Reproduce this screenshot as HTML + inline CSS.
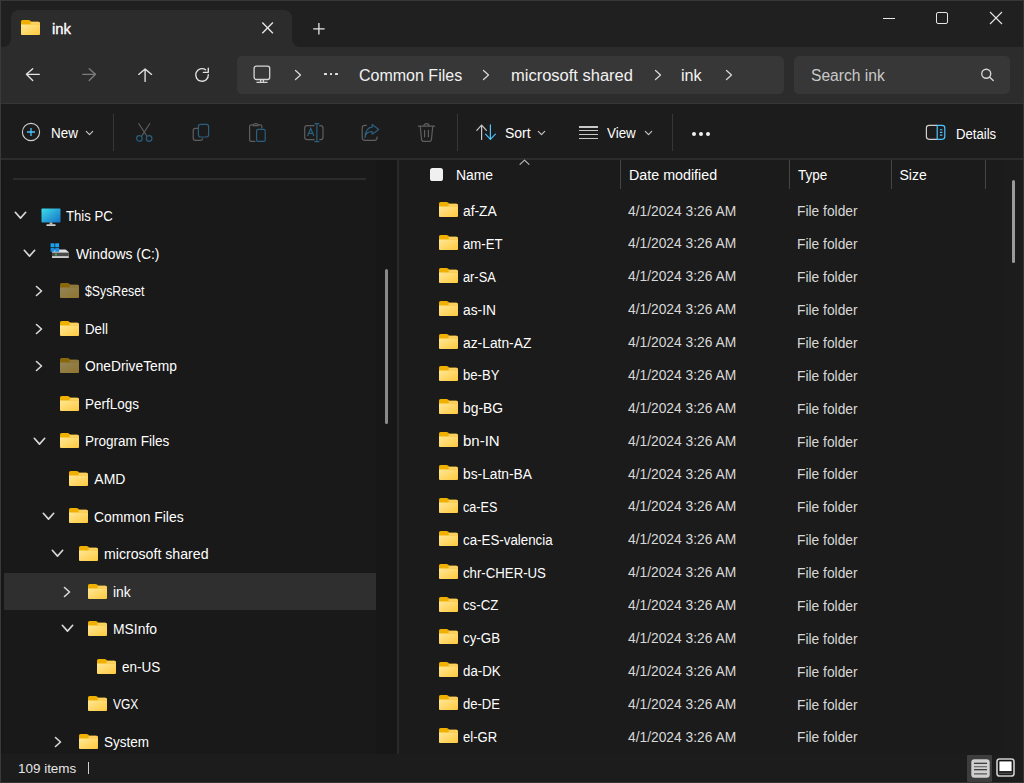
<!DOCTYPE html>
<html><head><meta charset="utf-8"><title>ink - File Explorer</title>
<style>
html,body{margin:0;padding:0;}
body{width:1024px;height:783px;overflow:hidden;position:relative;background:#191919;font-family:"Liberation Sans", sans-serif;}
.abs{position:absolute;}
.fd{position:absolute;overflow:visible;}
.t{position:absolute;white-space:nowrap;}
</style></head><body>
<svg width="0" height="0" style="position:absolute">
<defs>
<linearGradient id="fgr" x1="0" y1="0" x2="1" y2="1"><stop offset="0" stop-color="#FFE795"/><stop offset="1" stop-color="#FFC93E"/></linearGradient>
<linearGradient id="pcg" x1="0" y1="0" x2="1" y2="1"><stop offset="0" stop-color="#3DDCEB"/><stop offset="1" stop-color="#1571C6"/></linearGradient>
<symbol id="fold" viewBox="0 0 19 15">
<path d="M0 1.6Q0 0 1.6 0H7.6Q8.6 0 9.3 .8L10.3 1.8H17.4Q19 1.8 19 3.4V13.4Q19 15 17.4 15H1.6Q0 15 0 13.4Z" fill="#F0B000"/>
<path d="M9.6 1.8H17.4Q19 1.8 19 3.4V4.6H9.6Z" fill="#FAD060"/>
<path d="M0 4.6H19V13.4Q19 15 17.4 15H1.6Q0 15 0 13.4Z" fill="url(#fgr)"/>
</symbol>
</defs></svg>
<div class="abs" style="left:0;top:0;width:1024px;height:47px;background:#202020"></div>
<div class="abs" style="left:11px;top:10px;width:281px;height:37px;background:#2c2c2c;border-radius:8px 8px 0 0"></div>
<div class="abs" style="left:3px;top:39px;width:8px;height:8px;background:#2c2c2c"></div>
<div class="abs" style="left:3px;top:39px;width:8px;height:8px;background:#202020;border-bottom-right-radius:8px"></div>
<div class="abs" style="left:292px;top:39px;width:8px;height:8px;background:#2c2c2c"></div>
<div class="abs" style="left:292px;top:39px;width:8px;height:8px;background:#202020;border-bottom-left-radius:8px"></div>
<svg class="fd" style="left:21px;top:20px;" width="19" height="15" viewBox="0 0 19 15"><use href="#fold"/></svg>
<div class="t" style="left:51.5px;top:21.30px;font-size:15px;line-height:15px;color:#ffffff;transform:scaleX(0.9911);transform-origin:0 0;-webkit-text-stroke:.35px #fff;">ink</div>
<svg class="abs" style="left:261px;top:22px" width="13" height="12" viewBox="0 0 13 12"><path d="M1.3 .6L11.9 11.2M11.9 .6L1.3 11.2" stroke="#e6e6e6" stroke-width="1.35" fill="none"/></svg>
<svg class="abs" style="left:312px;top:22px" width="14" height="14" viewBox="0 0 14 14"><path d="M6.9 1.1V12.5M1.2 6.8H12.6" stroke="#e6e6e6" stroke-width="1.3" fill="none"/></svg>
<div class="abs" style="left:883px;top:17.5px;width:12px;height:1px;background:#e6e6e6"></div>
<div class="abs" style="left:936px;top:11.5px;width:10px;height:10px;border:1px solid #e6e6e6;border-radius:2px"></div>
<svg class="abs" style="left:989px;top:11px" width="14" height="14" viewBox="0 0 14 14"><path d="M1 1L13 13M13 1L1 13" stroke="#e6e6e6" stroke-width="1.1" fill="none"/></svg>
<div class="abs" style="left:0;top:47px;width:1024px;height:56px;background:#2c2c2c"></div>
<div class="abs" style="left:0;top:103px;width:1024px;height:1px;background:#363636"></div>
<svg class="abs" style="left:24px;top:66px" width="18" height="17" viewBox="0 0 18 17"><path d="M2.4 8.3H15.3M8.7 2.7L2.4 8.3L8.7 14.5" stroke="#e4e4e4" stroke-width="1.35" fill="none" stroke-linecap="round" stroke-linejoin="round"/></svg>
<svg class="abs" style="left:81px;top:66px" width="18" height="17" viewBox="0 0 18 17"><path d="M1.7 8.3H14.5M8.2 2.7L14.5 8.3L8.2 14.5" stroke="#7c7c7c" stroke-width="1.35" fill="none" stroke-linecap="round" stroke-linejoin="round"/></svg>
<svg class="abs" style="left:137px;top:67px" width="17" height="17" viewBox="0 0 17 17"><path d="M8.1 1.9V14.4M1.7 7.4L8.1 1.9L14.6 7.4" stroke="#e4e4e4" stroke-width="1.35" fill="none" stroke-linecap="round" stroke-linejoin="round"/></svg>
<svg class="abs" style="left:193px;top:66px" width="18" height="18" viewBox="0 0 18 18"><path d="M15.3 8.6A6.3 6.3 0 1 1 12.6 3.8" stroke="#e4e4e4" stroke-width="1.35" fill="none" stroke-linecap="round"/><path d="M15.3 2.2V6.3H10.3" stroke="#e4e4e4" stroke-width="1.35" fill="none" stroke-linecap="round" stroke-linejoin="round"/></svg>
<div class="abs" style="left:237px;top:56px;width:547px;height:38px;background:#373737;border-radius:5px"></div>
<svg class="abs" style="left:253px;top:65px" width="18" height="19" viewBox="0 0 18 19"><rect x="1.1" y="1.1" width="15.6" height="13.4" rx="2.2" stroke="#d6d6d6" stroke-width="1.3" fill="none"/><path d="M7.6 14.5V16.8M10.4 14.5V16.8M3.5 17.4H14.5" stroke="#d6d6d6" stroke-width="1.3" fill="none"/></svg>
<svg class="abs" style="left:293.5px;top:69px" width="8" height="12" viewBox="0 0 8 12"><path d="M1.5 1.5L6.5 6.0L1.5 10.5" stroke="#d6d6d6" stroke-width="1.3" fill="none" stroke-linecap="round" stroke-linejoin="round"/></svg>
<div class="abs" style="left:324px;top:72.8px;width:2.6px;height:2.6px;background:#e6e6e6;border-radius:.6px"></div>
<div class="abs" style="left:329.7px;top:72.8px;width:2.6px;height:2.6px;background:#e6e6e6;border-radius:.6px"></div>
<div class="abs" style="left:335.4px;top:72.8px;width:2.6px;height:2.6px;background:#e6e6e6;border-radius:.6px"></div>
<div class="t" style="left:359px;top:67.96px;font-size:16px;line-height:16px;color:#f2f2f2;">Common Files</div>
<svg class="abs" style="left:481.5px;top:69px" width="8" height="12" viewBox="0 0 8 12"><path d="M1.5 1.5L6.5 6.0L1.5 10.5" stroke="#d6d6d6" stroke-width="1.3" fill="none" stroke-linecap="round" stroke-linejoin="round"/></svg>
<div class="t" style="left:511px;top:67.96px;font-size:16px;line-height:16px;color:#f2f2f2;transform:scaleX(1.0310);transform-origin:0 0;">microsoft shared</div>
<svg class="abs" style="left:653.5px;top:69px" width="8" height="12" viewBox="0 0 8 12"><path d="M1.5 1.5L6.5 6.0L1.5 10.5" stroke="#d6d6d6" stroke-width="1.3" fill="none" stroke-linecap="round" stroke-linejoin="round"/></svg>
<div class="t" style="left:681px;top:67.96px;font-size:16px;line-height:16px;color:#f2f2f2;transform:scaleX(1.0115);transform-origin:0 0;">ink</div>
<svg class="abs" style="left:724.5px;top:69px" width="8" height="12" viewBox="0 0 8 12"><path d="M1.5 1.5L6.5 6.0L1.5 10.5" stroke="#d6d6d6" stroke-width="1.3" fill="none" stroke-linecap="round" stroke-linejoin="round"/></svg>
<div class="abs" style="left:794px;top:56px;width:216px;height:38px;background:#373737;border-radius:5px"></div>
<div class="t" style="left:811px;top:67.96px;font-size:16px;line-height:16px;color:#c9c9c9;transform:scaleX(0.9766);transform-origin:0 0;">Search ink</div>
<svg class="abs" style="left:979px;top:66px" width="17" height="17" viewBox="0 0 17 17"><circle cx="7.25" cy="7.75" r="4.5" stroke="#d6d6d6" stroke-width="1.35" fill="none"/><path d="M10.5 11L14.2 14.5" stroke="#d6d6d6" stroke-width="1.4" stroke-linecap="round"/></svg>
<div class="abs" style="left:0;top:104px;width:1024px;height:54px;background:#1c1c1c"></div>
<div class="abs" style="left:0;top:158px;width:1024px;height:2px;background:#2c2c2c"></div>
<svg class="abs" style="left:21px;top:122px" width="20" height="20" viewBox="0 0 20 20"><circle cx="10" cy="10" r="8.6" stroke="#cfcfcf" stroke-width="1.1" fill="none"/><path d="M10 6V14M6 10H14" stroke="#4cc2ff" stroke-width="1.3"/></svg>
<div class="t" style="left:51px;top:126.45px;font-size:14px;line-height:14px;color:#ffffff;transform:scaleX(0.9621);transform-origin:0 0;">New</div>
<svg class="abs" style="left:85px;top:129.5px" width="9" height="6" viewBox="0 0 9 6"><path d="M1.3 1.3L4.5 4.7L7.7 1.3" stroke="#c8c8c8" stroke-width="1.1" fill="none" stroke-linecap="round" stroke-linejoin="round"/></svg>
<div class="abs" style="left:113px;top:114px;width:1px;height:37px;background:#363636"></div>
<svg class="abs" style="left:134px;top:121px" width="21" height="22" viewBox="0 0 21 22"><path d="M4.5 2.2L12.6 14.8M16 2.2L7.9 14.8" stroke="#5e5e5e" stroke-width="1.2" fill="none"/><circle cx="5.4" cy="17.4" r="2.8" stroke="#2a5f7f" stroke-width="1.2" fill="#1c1c1c"/><circle cx="15.1" cy="17.4" r="2.8" stroke="#2a5f7f" stroke-width="1.2" fill="#1c1c1c"/></svg>
<svg class="abs" style="left:191px;top:122px" width="20" height="21" viewBox="0 0 20 21"><path d="M7 6.4H4.3Q2.2 6.4 2.2 8.5V15.9Q2.2 18.3 4.5 18.3H9.4Q11.4 18.3 11.6 16.2" stroke="#5e5e5e" stroke-width="1.2" fill="none"/><rect x="7.4" y="2.4" width="10.2" height="12.6" rx="2.2" stroke="#2a5f7f" stroke-width="1.2" fill="none"/></svg>
<svg class="abs" style="left:247px;top:122px" width="21" height="21" viewBox="0 0 21 21"><path d="M8.3 19.4H4.3Q2.6 19.4 2.6 17.7V4.5Q2.6 2.8 4.3 2.8H6.2M11.2 2.8H13.2Q14.9 2.8 14.9 4.5V6.6" stroke="#5e5e5e" stroke-width="1.2" fill="none"/><path d="M6.2 3.6Q6.2 1.6 8.7 1.6Q11.2 1.6 11.2 3.6Z" stroke="#5e5e5e" stroke-width="1.1" fill="none"/><rect x="9.6" y="7.4" width="8.6" height="12" rx="1.4" stroke="#2a5f7f" stroke-width="1.2" fill="none"/></svg>
<svg class="abs" style="left:303px;top:122px" width="22" height="21" viewBox="0 0 22 21"><path d="M11.6 3.6H4.2Q1.7 3.6 1.7 6.1V15.2Q1.7 17.6 4.2 17.6H11.6M16.2 3.6H17.6Q20 3.6 20 6.1V15.2Q20 17.6 17.6 17.6H16.2" stroke="#5e5e5e" stroke-width="1.2" fill="none"/><path d="M4.6 14L7.7 6.4L10.9 14M5.8 11.3H9.7" stroke="#2a5f7f" stroke-width="1.2" fill="none"/><path d="M13.9 1.7V19.6M11.5 1.7H16.3M11.5 19.6H16.3" stroke="#2a5f7f" stroke-width="1.2" fill="none"/></svg>
<svg class="abs" style="left:360px;top:122px" width="21" height="21" viewBox="0 0 21 21"><path d="M6.8 3.3H5Q2.2 3.3 2.2 6.1V15.6Q2.2 18.4 5 18.4H14.4Q17.1 18.4 17.1 15.6V14.6" stroke="#5e5e5e" stroke-width="1.2" fill="none"/><path d="M5 15.5Q5.6 9.5 12.2 9.6V12.2L18.7 7.4L12.2 2.5V5.1Q5.5 5.5 5 15.5Z" stroke="#2a5f7f" stroke-width="1.2" fill="none" stroke-linejoin="round"/></svg>
<svg class="abs" style="left:416px;top:121px" width="21" height="22" viewBox="0 0 21 22"><path d="M2.3 5.2H18.6M7.9 5.2Q7.9 2.7 10.5 2.7Q13.1 2.7 13.1 5.2M4.2 5.2L5.6 18.6Q5.8 20.3 7.5 20.3H13.5Q15.2 20.3 15.4 18.6L16.8 5.2M8.6 9.3V15.8M12.4 9.3V15.8" stroke="#5e5e5e" stroke-width="1.2" fill="none" stroke-linecap="round"/></svg>
<div class="abs" style="left:457px;top:114px;width:1px;height:37px;background:#363636"></div>
<svg class="abs" style="left:475px;top:123px" width="23" height="18" viewBox="0 0 23 18"><path d="M6.6 2.2V16.4M1.8 7.4L6.6 2.2L11.4 7.4" stroke="#c8c8c8" stroke-width="1.2" fill="none" stroke-linecap="round" stroke-linejoin="round"/><path d="M15.4 1.8V16.4M10.6 11.2L15.4 16.4L20.4 11.2" stroke="#4cc2ff" stroke-width="1.2" fill="none" stroke-linecap="round" stroke-linejoin="round"/></svg>
<div class="t" style="left:505px;top:126.45px;font-size:14px;line-height:14px;color:#ffffff;">Sort</div>
<svg class="abs" style="left:537px;top:129.5px" width="9" height="6" viewBox="0 0 9 6"><path d="M1.3 1.3L4.5 4.7L7.7 1.3" stroke="#c8c8c8" stroke-width="1.1" fill="none" stroke-linecap="round" stroke-linejoin="round"/></svg>
<div class="abs" style="left:579px;top:126.4px;width:19px;height:1.3px;background:#c8c8c8"></div>
<div class="abs" style="left:579px;top:130.1px;width:19px;height:1.3px;background:#c8c8c8"></div>
<div class="abs" style="left:579px;top:133.8px;width:19px;height:1.3px;background:#c8c8c8"></div>
<div class="abs" style="left:579px;top:137.5px;width:19px;height:1.3px;background:#c8c8c8"></div>
<div class="t" style="left:607px;top:126.45px;font-size:14px;line-height:14px;color:#ffffff;transform:scaleX(0.9554);transform-origin:0 0;">View</div>
<svg class="abs" style="left:644px;top:129.5px" width="9" height="6" viewBox="0 0 9 6"><path d="M1.3 1.3L4.5 4.7L7.7 1.3" stroke="#c8c8c8" stroke-width="1.1" fill="none" stroke-linecap="round" stroke-linejoin="round"/></svg>
<div class="abs" style="left:672px;top:114px;width:1px;height:37px;background:#363636"></div>
<div class="abs" style="left:691.6px;top:131.5px;width:4px;height:4px;background:#f0f0f0;border-radius:50%"></div>
<div class="abs" style="left:698.95px;top:131.5px;width:4px;height:4px;background:#f0f0f0;border-radius:50%"></div>
<div class="abs" style="left:706.3px;top:131.5px;width:4px;height:4px;background:#f0f0f0;border-radius:50%"></div>
<svg class="abs" style="left:925px;top:124px" width="22" height="17" viewBox="0 0 22 17"><path d="M12.2 1.3H4.1Q1.4 1.3 1.4 4V12.6Q1.4 15.3 4.1 15.3H12.2" stroke="#cfcfcf" stroke-width="1.2" fill="none"/><path d="M12.2 1.3H17Q19.8 1.3 19.8 4V12.6Q19.8 15.3 17 15.3H12.2Z" stroke="#4cc2ff" stroke-width="1.2" fill="none"/><path d="M14.9 5.7H17.4M14.9 8.4H17.4M14.9 11.1H17.4" stroke="#4cc2ff" stroke-width="1.1"/></svg>
<div class="t" style="left:956px;top:126.75px;font-size:14px;line-height:14px;color:#ffffff;transform:scaleX(0.9394);transform-origin:0 0;">Details</div>
<div class="abs" style="left:0;top:160px;width:1024px;height:594px;background:#1b1b1b"></div>
<div class="abs" style="left:0;top:160px;width:397px;height:594px;background:#191919"></div>
<div class="abs" style="left:376px;top:160px;width:21px;height:594px;background:#171717"></div>
<div class="abs" style="left:1px;top:160px;width:2.5px;height:594px;background:#171717"></div>
<div class="abs" style="left:13px;top:178px;width:353px;height:2px;background:#2b2b2b"></div>
<div class="abs" style="left:385px;top:269px;width:2.5px;height:155px;background:#8a8a8a;border-radius:2px"></div>
<div class="abs" style="left:397px;top:160px;width:2px;height:594px;background:#2a2a2a"></div>
<svg class="abs" style="left:14.0px;top:211.1px" width="13" height="8.4" viewBox="0 0 13 8.4"><path d="M1.3 1.3L6.5 7.1000000000000005L11.7 1.3" stroke="#d8d8d8" stroke-width="1.65" fill="none" stroke-linecap="round" stroke-linejoin="round"/></svg>
<svg class="abs" style="left:40.5px;top:207.80px" width="20" height="19" viewBox="0 0 20 19"><rect x=".5" y=".5" width="19" height="14" rx=".8" fill="url(#pcg)"/><rect x="8.6" y="14.5" width="2.8" height="2" fill="#b9b9b9"/><rect x="5.3" y="16.3" width="9.4" height="1.8" rx=".8" fill="#cfcfcf"/></svg>
<div class="t" style="left:66.3px;top:209.05px;font-size:14px;line-height:14px;color:#ffffff;transform:scaleX(0.9401);transform-origin:0 0;">This PC</div>
<svg class="abs" style="left:23.35px;top:248.67px" width="13" height="8.4" viewBox="0 0 13 8.4"><path d="M1.3 1.3L6.5 7.1000000000000005L11.7 1.3" stroke="#d8d8d8" stroke-width="1.65" fill="none" stroke-linecap="round" stroke-linejoin="round"/></svg>
<svg class="abs" style="left:49.5px;top:243.37px" width="20" height="16" viewBox="0 0 20 16"><path d="M4 6.6H15.6L18.6 9V14Q18.6 15 17.6 15H3Q2 15 2 14V9Z" fill="#dedede"/><rect x="2" y="9.6" width="16.6" height="3.8" fill="#4a4a4a"/><rect x="2" y="13.4" width="16.6" height="1.6" fill="#cfcfcf"/><circle cx="6" cy="11.5" r=".9" fill="#39d353"/><rect x=".6" y=".3" width="3.9" height="3.9" fill="#1aa3f0"/><rect x="5.2" y=".3" width="3.9" height="3.9" fill="#1aa3f0"/><rect x=".6" y="4.9" width="3.9" height="3.9" fill="#1590e6"/><rect x="5.2" y="4.9" width="3.9" height="3.9" fill="#1590e6"/></svg>
<div class="t" style="left:75.65px;top:246.62px;font-size:14px;line-height:14px;color:#ffffff;transform:scaleX(0.9929);transform-origin:0 0;">Windows (C:)</div>
<svg class="abs" style="left:35.2px;top:285.24px" width="8" height="12" viewBox="0 0 8 12"><path d="M1.5 1.5L6.5 6.0L1.5 10.5" stroke="#d8d8d8" stroke-width="1.65" fill="none" stroke-linecap="round" stroke-linejoin="round"/></svg>
<svg class="fd" style="left:60.0px;top:282.94px;opacity:.52;" width="19" height="15" viewBox="0 0 19 15"><use href="#fold"/></svg>
<div class="t" style="left:85.0px;top:284.19px;font-size:14px;line-height:14px;color:#ffffff;transform:scaleX(0.8775);transform-origin:0 0;">$SysReset</div>
<svg class="abs" style="left:35.2px;top:322.81px" width="8" height="12" viewBox="0 0 8 12"><path d="M1.5 1.5L6.5 6.0L1.5 10.5" stroke="#d8d8d8" stroke-width="1.65" fill="none" stroke-linecap="round" stroke-linejoin="round"/></svg>
<svg class="fd" style="left:60.0px;top:320.51px;" width="19" height="15" viewBox="0 0 19 15"><use href="#fold"/></svg>
<div class="t" style="left:85.0px;top:321.76px;font-size:14px;line-height:14px;color:#ffffff;transform:scaleX(0.9497);transform-origin:0 0;">Dell</div>
<svg class="abs" style="left:35.2px;top:360.38px" width="8" height="12" viewBox="0 0 8 12"><path d="M1.5 1.5L6.5 6.0L1.5 10.5" stroke="#d8d8d8" stroke-width="1.65" fill="none" stroke-linecap="round" stroke-linejoin="round"/></svg>
<svg class="fd" style="left:60.0px;top:358.08px;opacity:.52;" width="19" height="15" viewBox="0 0 19 15"><use href="#fold"/></svg>
<div class="t" style="left:85.0px;top:359.33px;font-size:14px;line-height:14px;color:#ffffff;transform:scaleX(0.9831);transform-origin:0 0;">OneDriveTemp</div>
<svg class="fd" style="left:60.0px;top:395.65px;" width="19" height="15" viewBox="0 0 19 15"><use href="#fold"/></svg>
<div class="t" style="left:85.0px;top:396.90px;font-size:14px;line-height:14px;color:#ffffff;transform:scaleX(0.9619);transform-origin:0 0;">PerfLogs</div>
<svg class="abs" style="left:32.7px;top:436.52px" width="13" height="8.4" viewBox="0 0 13 8.4"><path d="M1.3 1.3L6.5 7.1000000000000005L11.7 1.3" stroke="#d8d8d8" stroke-width="1.65" fill="none" stroke-linecap="round" stroke-linejoin="round"/></svg>
<svg class="fd" style="left:60.0px;top:433.22px;" width="19" height="15" viewBox="0 0 19 15"><use href="#fold"/></svg>
<div class="t" style="left:85.0px;top:434.47px;font-size:14px;line-height:14px;color:#ffffff;transform:scaleX(0.9664);transform-origin:0 0;">Program Files</div>
<svg class="fd" style="left:69.35px;top:470.79px;" width="19" height="15" viewBox="0 0 19 15"><use href="#fold"/></svg>
<div class="t" style="left:94.35px;top:472.04px;font-size:14px;line-height:14px;color:#ffffff;">AMD</div>
<svg class="abs" style="left:42.05px;top:511.65999999999997px" width="13" height="8.4" viewBox="0 0 13 8.4"><path d="M1.3 1.3L6.5 7.1000000000000005L11.7 1.3" stroke="#d8d8d8" stroke-width="1.65" fill="none" stroke-linecap="round" stroke-linejoin="round"/></svg>
<svg class="fd" style="left:69.35px;top:508.36px;" width="19" height="15" viewBox="0 0 19 15"><use href="#fold"/></svg>
<div class="t" style="left:94.35px;top:509.61px;font-size:14px;line-height:14px;color:#ffffff;transform:scaleX(0.9934);transform-origin:0 0;">Common Files</div>
<svg class="abs" style="left:51.4px;top:549.23px" width="13" height="8.4" viewBox="0 0 13 8.4"><path d="M1.3 1.3L6.5 7.1000000000000005L11.7 1.3" stroke="#d8d8d8" stroke-width="1.65" fill="none" stroke-linecap="round" stroke-linejoin="round"/></svg>
<svg class="fd" style="left:78.7px;top:545.93px;" width="19" height="15" viewBox="0 0 19 15"><use href="#fold"/></svg>
<div class="t" style="left:103.7px;top:547.18px;font-size:14px;line-height:14px;color:#ffffff;transform:scaleX(1.0098);transform-origin:0 0;">microsoft shared</div>
<div class="abs" style="left:3.5px;top:572.70px;width:372px;height:37px;background:#2f2f2f;border-radius:1px"></div>
<svg class="abs" style="left:63.25px;top:585.8px" width="8" height="12" viewBox="0 0 8 12"><path d="M1.5 1.5L6.5 6.0L1.5 10.5" stroke="#d8d8d8" stroke-width="1.65" fill="none" stroke-linecap="round" stroke-linejoin="round"/></svg>
<svg class="fd" style="left:88.05px;top:583.5px;" width="19" height="15" viewBox="0 0 19 15"><use href="#fold"/></svg>
<div class="t" style="left:113.05px;top:584.75px;font-size:14px;line-height:14px;color:#ffffff;transform:scaleX(0.9922);transform-origin:0 0;">ink</div>
<svg class="abs" style="left:60.75px;top:624.37px" width="13" height="8.4" viewBox="0 0 13 8.4"><path d="M1.3 1.3L6.5 7.1000000000000005L11.7 1.3" stroke="#d8d8d8" stroke-width="1.65" fill="none" stroke-linecap="round" stroke-linejoin="round"/></svg>
<svg class="fd" style="left:88.05px;top:621.07px;" width="19" height="15" viewBox="0 0 19 15"><use href="#fold"/></svg>
<div class="t" style="left:113.05px;top:622.32px;font-size:14px;line-height:14px;color:#ffffff;transform:scaleX(0.9929);transform-origin:0 0;">MSInfo</div>
<svg class="fd" style="left:97.4px;top:658.64px;" width="19" height="15" viewBox="0 0 19 15"><use href="#fold"/></svg>
<div class="t" style="left:122.4px;top:659.89px;font-size:14px;line-height:14px;color:#ffffff;transform:scaleX(0.9633);transform-origin:0 0;">en-US</div>
<svg class="fd" style="left:88.05px;top:696.21px;" width="19" height="15" viewBox="0 0 19 15"><use href="#fold"/></svg>
<div class="t" style="left:113.05px;top:697.46px;font-size:14px;line-height:14px;color:#ffffff;transform:scaleX(0.8585);transform-origin:0 0;">VGX</div>
<svg class="abs" style="left:53.9px;top:736.08px" width="8" height="12" viewBox="0 0 8 12"><path d="M1.5 1.5L6.5 6.0L1.5 10.5" stroke="#d8d8d8" stroke-width="1.65" fill="none" stroke-linecap="round" stroke-linejoin="round"/></svg>
<svg class="fd" style="left:78.7px;top:733.78px;" width="19" height="15" viewBox="0 0 19 15"><use href="#fold"/></svg>
<div class="t" style="left:103.7px;top:735.03px;font-size:14px;line-height:14px;color:#ffffff;transform:scaleX(0.9606);transform-origin:0 0;">System</div>
<div class="abs" style="left:429.5px;top:167.5px;width:13.5px;height:13.5px;background:#f0f0f0;border-radius:2.6px"></div>
<div class="t" style="left:456px;top:167.85px;font-size:14px;line-height:14px;color:#ffffff;transform:scaleX(0.9931);transform-origin:0 0;">Name</div>
<svg class="abs" style="left:518px;top:158px" width="13" height="9" viewBox="0 0 13 9"><path d="M2 6.4L6.5 2.2L11 6.4" stroke="#bdbdbd" stroke-width="1.1" fill="none" stroke-linecap="round" stroke-linejoin="round"/></svg>
<div class="abs" style="left:620px;top:160px;width:1px;height:29px;background:#454545"></div>
<div class="abs" style="left:789px;top:160px;width:1px;height:29px;background:#454545"></div>
<div class="abs" style="left:891px;top:160px;width:1px;height:29px;background:#454545"></div>
<div class="abs" style="left:985px;top:160px;width:1px;height:29px;background:#454545"></div>
<div class="t" style="left:628.5px;top:167.85px;font-size:14px;line-height:14px;color:#ffffff;transform:scaleX(1.0199);transform-origin:0 0;">Date modified</div>
<div class="t" style="left:797.5px;top:167.85px;font-size:14px;line-height:14px;color:#ffffff;transform:scaleX(0.9651);transform-origin:0 0;">Type</div>
<div class="t" style="left:899.5px;top:167.85px;font-size:14px;line-height:14px;color:#ffffff;">Size</div>
<div class="abs" style="left:1003px;top:160px;width:20px;height:594px;background:#1c1c1c"></div>
<div class="abs" style="left:1012px;top:179.5px;width:3px;height:83.5px;background:#9a9a9a;border-radius:2px"></div>
<svg class="fd" style="left:439px;top:202.1px;" width="19" height="15" viewBox="0 0 19 15"><use href="#fold"/></svg>
<div class="t" style="left:463.2px;top:204.05px;font-size:14px;line-height:14px;color:#ffffff;transform:scaleX(0.9860);transform-origin:0 0;">af-ZA</div>
<div class="t" style="left:628px;top:204.62px;font-size:13.8px;line-height:13.8px;color:#d8d8d8;">4/1/2024 3:26 AM</div>
<div class="t" style="left:797.3px;top:204.45px;font-size:14px;line-height:14px;color:#d8d8d8;transform:scaleX(0.9853);transform-origin:0 0;">File folder</div>
<svg class="fd" style="left:439px;top:234.97px;" width="19" height="15" viewBox="0 0 19 15"><use href="#fold"/></svg>
<div class="t" style="left:463.2px;top:236.92px;font-size:14px;line-height:14px;color:#ffffff;transform:scaleX(0.9400);transform-origin:0 0;">am-ET</div>
<div class="t" style="left:628px;top:237.49px;font-size:13.8px;line-height:13.8px;color:#d8d8d8;">4/1/2024 3:26 AM</div>
<div class="t" style="left:797.3px;top:237.32px;font-size:14px;line-height:14px;color:#d8d8d8;transform:scaleX(0.9853);transform-origin:0 0;">File folder</div>
<svg class="fd" style="left:439px;top:267.84px;" width="19" height="15" viewBox="0 0 19 15"><use href="#fold"/></svg>
<div class="t" style="left:463.2px;top:269.79px;font-size:14px;line-height:14px;color:#ffffff;transform:scaleX(0.9136);transform-origin:0 0;">ar-SA</div>
<div class="t" style="left:628px;top:270.36px;font-size:13.8px;line-height:13.8px;color:#d8d8d8;">4/1/2024 3:26 AM</div>
<div class="t" style="left:797.3px;top:270.19px;font-size:14px;line-height:14px;color:#d8d8d8;transform:scaleX(0.9853);transform-origin:0 0;">File folder</div>
<svg class="fd" style="left:439px;top:300.71px;" width="19" height="15" viewBox="0 0 19 15"><use href="#fold"/></svg>
<div class="t" style="left:463.2px;top:302.66px;font-size:14px;line-height:14px;color:#ffffff;transform:scaleX(0.9834);transform-origin:0 0;">as-IN</div>
<div class="t" style="left:628px;top:303.23px;font-size:13.8px;line-height:13.8px;color:#d8d8d8;">4/1/2024 3:26 AM</div>
<div class="t" style="left:797.3px;top:303.06px;font-size:14px;line-height:14px;color:#d8d8d8;transform:scaleX(0.9853);transform-origin:0 0;">File folder</div>
<svg class="fd" style="left:439px;top:333.58px;" width="19" height="15" viewBox="0 0 19 15"><use href="#fold"/></svg>
<div class="t" style="left:463.2px;top:335.53px;font-size:14px;line-height:14px;color:#ffffff;transform:scaleX(0.9871);transform-origin:0 0;">az-Latn-AZ</div>
<div class="t" style="left:628px;top:336.10px;font-size:13.8px;line-height:13.8px;color:#d8d8d8;">4/1/2024 3:26 AM</div>
<div class="t" style="left:797.3px;top:335.93px;font-size:14px;line-height:14px;color:#d8d8d8;transform:scaleX(0.9853);transform-origin:0 0;">File folder</div>
<svg class="fd" style="left:439px;top:366.45px;" width="19" height="15" viewBox="0 0 19 15"><use href="#fold"/></svg>
<div class="t" style="left:463.2px;top:368.40px;font-size:14px;line-height:14px;color:#ffffff;transform:scaleX(0.9350);transform-origin:0 0;">be-BY</div>
<div class="t" style="left:628px;top:368.97px;font-size:13.8px;line-height:13.8px;color:#d8d8d8;">4/1/2024 3:26 AM</div>
<div class="t" style="left:797.3px;top:368.80px;font-size:14px;line-height:14px;color:#d8d8d8;transform:scaleX(0.9853);transform-origin:0 0;">File folder</div>
<svg class="fd" style="left:439px;top:399.32px;" width="19" height="15" viewBox="0 0 19 15"><use href="#fold"/></svg>
<div class="t" style="left:463.2px;top:401.27px;font-size:14px;line-height:14px;color:#ffffff;transform:scaleX(0.9906);transform-origin:0 0;">bg-BG</div>
<div class="t" style="left:628px;top:401.84px;font-size:13.8px;line-height:13.8px;color:#d8d8d8;">4/1/2024 3:26 AM</div>
<div class="t" style="left:797.3px;top:401.67px;font-size:14px;line-height:14px;color:#d8d8d8;transform:scaleX(0.9853);transform-origin:0 0;">File folder</div>
<svg class="fd" style="left:439px;top:432.19px;" width="19" height="15" viewBox="0 0 19 15"><use href="#fold"/></svg>
<div class="t" style="left:463.2px;top:434.14px;font-size:14px;line-height:14px;color:#ffffff;transform:scaleX(1.0717);transform-origin:0 0;">bn-IN</div>
<div class="t" style="left:628px;top:434.71px;font-size:13.8px;line-height:13.8px;color:#d8d8d8;">4/1/2024 3:26 AM</div>
<div class="t" style="left:797.3px;top:434.54px;font-size:14px;line-height:14px;color:#d8d8d8;transform:scaleX(0.9853);transform-origin:0 0;">File folder</div>
<svg class="fd" style="left:439px;top:465.06px;" width="19" height="15" viewBox="0 0 19 15"><use href="#fold"/></svg>
<div class="t" style="left:463.2px;top:467.01px;font-size:14px;line-height:14px;color:#ffffff;transform:scaleX(0.9845);transform-origin:0 0;">bs-Latn-BA</div>
<div class="t" style="left:628px;top:467.58px;font-size:13.8px;line-height:13.8px;color:#d8d8d8;">4/1/2024 3:26 AM</div>
<div class="t" style="left:797.3px;top:467.41px;font-size:14px;line-height:14px;color:#d8d8d8;transform:scaleX(0.9853);transform-origin:0 0;">File folder</div>
<svg class="fd" style="left:439px;top:497.93px;" width="19" height="15" viewBox="0 0 19 15"><use href="#fold"/></svg>
<div class="t" style="left:463.2px;top:499.88px;font-size:14px;line-height:14px;color:#ffffff;transform:scaleX(0.8998);transform-origin:0 0;">ca-ES</div>
<div class="t" style="left:628px;top:500.45px;font-size:13.8px;line-height:13.8px;color:#d8d8d8;">4/1/2024 3:26 AM</div>
<div class="t" style="left:797.3px;top:500.28px;font-size:14px;line-height:14px;color:#d8d8d8;transform:scaleX(0.9853);transform-origin:0 0;">File folder</div>
<svg class="fd" style="left:439px;top:530.8px;" width="19" height="15" viewBox="0 0 19 15"><use href="#fold"/></svg>
<div class="t" style="left:463.2px;top:532.75px;font-size:14px;line-height:14px;color:#ffffff;transform:scaleX(0.9516);transform-origin:0 0;">ca-ES-valencia</div>
<div class="t" style="left:628px;top:533.32px;font-size:13.8px;line-height:13.8px;color:#d8d8d8;">4/1/2024 3:26 AM</div>
<div class="t" style="left:797.3px;top:533.15px;font-size:14px;line-height:14px;color:#d8d8d8;transform:scaleX(0.9853);transform-origin:0 0;">File folder</div>
<svg class="fd" style="left:439px;top:563.67px;" width="19" height="15" viewBox="0 0 19 15"><use href="#fold"/></svg>
<div class="t" style="left:463.2px;top:565.62px;font-size:14px;line-height:14px;color:#ffffff;transform:scaleX(0.9434);transform-origin:0 0;">chr-CHER-US</div>
<div class="t" style="left:628px;top:566.19px;font-size:13.8px;line-height:13.8px;color:#d8d8d8;">4/1/2024 3:26 AM</div>
<div class="t" style="left:797.3px;top:566.02px;font-size:14px;line-height:14px;color:#d8d8d8;transform:scaleX(0.9853);transform-origin:0 0;">File folder</div>
<svg class="fd" style="left:439px;top:596.54px;" width="19" height="15" viewBox="0 0 19 15"><use href="#fold"/></svg>
<div class="t" style="left:463.2px;top:598.49px;font-size:14px;line-height:14px;color:#ffffff;transform:scaleX(0.9451);transform-origin:0 0;">cs-CZ</div>
<div class="t" style="left:628px;top:599.06px;font-size:13.8px;line-height:13.8px;color:#d8d8d8;">4/1/2024 3:26 AM</div>
<div class="t" style="left:797.3px;top:598.89px;font-size:14px;line-height:14px;color:#d8d8d8;transform:scaleX(0.9853);transform-origin:0 0;">File folder</div>
<svg class="fd" style="left:439px;top:629.41px;" width="19" height="15" viewBox="0 0 19 15"><use href="#fold"/></svg>
<div class="t" style="left:463.2px;top:631.36px;font-size:14px;line-height:14px;color:#ffffff;transform:scaleX(0.9520);transform-origin:0 0;">cy-GB</div>
<div class="t" style="left:628px;top:631.93px;font-size:13.8px;line-height:13.8px;color:#d8d8d8;">4/1/2024 3:26 AM</div>
<div class="t" style="left:797.3px;top:631.76px;font-size:14px;line-height:14px;color:#d8d8d8;transform:scaleX(0.9853);transform-origin:0 0;">File folder</div>
<svg class="fd" style="left:439px;top:662.28px;" width="19" height="15" viewBox="0 0 19 15"><use href="#fold"/></svg>
<div class="t" style="left:463.2px;top:664.23px;font-size:14px;line-height:14px;color:#ffffff;transform:scaleX(0.9493);transform-origin:0 0;">da-DK</div>
<div class="t" style="left:628px;top:664.80px;font-size:13.8px;line-height:13.8px;color:#d8d8d8;">4/1/2024 3:26 AM</div>
<div class="t" style="left:797.3px;top:664.63px;font-size:14px;line-height:14px;color:#d8d8d8;transform:scaleX(0.9853);transform-origin:0 0;">File folder</div>
<svg class="fd" style="left:439px;top:695.15px;" width="19" height="15" viewBox="0 0 19 15"><use href="#fold"/></svg>
<div class="t" style="left:463.2px;top:697.10px;font-size:14px;line-height:14px;color:#ffffff;transform:scaleX(0.9328);transform-origin:0 0;">de-DE</div>
<div class="t" style="left:628px;top:697.67px;font-size:13.8px;line-height:13.8px;color:#d8d8d8;">4/1/2024 3:26 AM</div>
<div class="t" style="left:797.3px;top:697.50px;font-size:14px;line-height:14px;color:#d8d8d8;transform:scaleX(0.9853);transform-origin:0 0;">File folder</div>
<svg class="fd" style="left:439px;top:728.02px;" width="19" height="15" viewBox="0 0 19 15"><use href="#fold"/></svg>
<div class="t" style="left:463.2px;top:729.97px;font-size:14px;line-height:14px;color:#ffffff;transform:scaleX(0.9328);transform-origin:0 0;">el-GR</div>
<div class="t" style="left:628px;top:730.54px;font-size:13.8px;line-height:13.8px;color:#d8d8d8;">4/1/2024 3:26 AM</div>
<div class="t" style="left:797.3px;top:730.37px;font-size:14px;line-height:14px;color:#d8d8d8;transform:scaleX(0.9853);transform-origin:0 0;">File folder</div>
<div class="abs" style="left:0;top:754px;width:1024px;height:29px;background:#1c1c1c"></div>
<div class="t" style="left:18px;top:762.07px;font-size:13.5px;line-height:13.5px;color:#e6e6e6;transform:scaleX(0.9953);transform-origin:0 0;">109 items</div>
<div class="abs" style="left:88px;top:762px;width:1px;height:12px;background:#cfcfcf"></div>
<div class="abs" style="left:966.5px;top:755px;width:25.5px;height:26.5px;background:#3d3d3d;border-radius:1px"></div>
<svg class="abs" style="left:971px;top:759px" width="19" height="19" viewBox="0 0 19 19"><rect x=".3" y=".3" width="18.4" height="18.4" rx="3" fill="#cfcfcf"/><path d="M3 4.2H16M3 10.8H16" stroke="#111" stroke-width="1.1"/><path d="M3 7.8H16M3 14.9H16" stroke="#555" stroke-width="1.1"/></svg>
<svg class="abs" style="left:995.5px;top:758px" width="19" height="19" viewBox="0 0 19 19"><rect x="1" y="1" width="17" height="17" rx="2.6" fill="none" stroke="#cfcfcf" stroke-width="1.6"/><rect x="3" y="3" width="13" height="10.5" fill="#ffffff" stroke="#111" stroke-width=".8"/><path d="M3 15.3H16" stroke="#555" stroke-width="1"/></svg>
<div class="abs" style="left:0;top:0;width:1024px;height:1px;background:#383838"></div>
<div class="abs" style="left:0;top:0;width:1px;height:783px;background:#3a3a3a"></div>
<div class="abs" style="left:1023px;top:0;width:1px;height:783px;background:#333333"></div>
<div class="abs" style="left:0;top:782px;width:1024px;height:1px;background:#333333"></div>
</body></html>
